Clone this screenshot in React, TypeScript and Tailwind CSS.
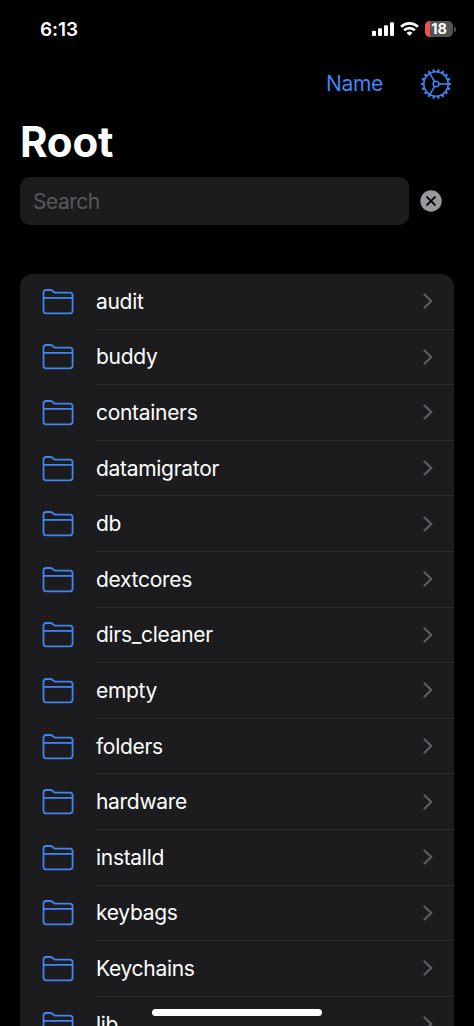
const GEAR_TEETH = 18;

const folders = [
  'audit',
  'buddy',
  'containers',
  'datamigrator',
  'db',
  'dextcores',
  'dirs_cleaner',
  'empty',
  'folders',
  'hardware',
  'installd',
  'keybags',
  'Keychains',
  'lib',
];

function SignalIcon() {
  return (
    <svg width="22" height="14" viewBox="0 0 22 14" fill="currentColor">
      <rect x="0" y="8.8" width="4" height="5.2" rx="1.1" />
      <rect x="6" y="6.2" width="4" height="7.8" rx="1.1" />
      <rect x="12" y="3.2" width="4" height="10.8" rx="1.1" />
      <rect x="18" y="0.2" width="4" height="13.8" rx="1.1" />
    </svg>
  );
}

function WifiIcon() {
  return (
    <svg width="19" height="14" viewBox="0 0 19 14" fill="none" stroke="currentColor" strokeWidth="2.7">
      <path d="M1 4.8 A12.2 12.2 0 0 1 18 4.8" />
      <path d="M4.1 8.3 A7.8 7.8 0 0 1 14.9 8.3" />
      <path d="M9.5 13.8 L6.6 10.9 A4.1 4.1 0 0 1 12.4 10.9 Z" fill="currentColor" stroke="none" />
    </svg>
  );
}

function Battery({ level }: { level: number }) {
  return (
    <div className="flex items-center gap-px">
      <div className="relative h-4 w-7 overflow-hidden rounded-[5px] bg-[#545456]">
        <div className="h-full bg-[#f2504b]" style={{ width: `${level}%` }} />
        <span className="absolute inset-0 text-center text-[14.5px] leading-4 font-bold">{level}</span>
      </div>
      <div className="h-[5px] w-[2px] rounded-r-full bg-[#545456]" />
    </div>
  );
}

function GearIcon() {
  const teeth = Array.from({ length: GEAR_TEETH }, (_, i) => (i * 360) / GEAR_TEETH);
  return (
    <svg width="30" height="30" viewBox="-15 -15 30 30" fill="none" stroke="currentColor" strokeWidth="1.6">
      <circle r="12.2" />
      <circle r="2.8" strokeWidth="1.5" />
      {[0, 120, 240].map((angle) => (
        <path key={angle} d="M2.8 0 H12" transform={`rotate(${angle})`} />
      ))}
      {teeth.map((angle) => (
        <path key={angle} d="M12.4 0 H14.9" strokeWidth="2.2" transform={`rotate(${angle})`} />
      ))}
    </svg>
  );
}

function FolderIcon() {
  return (
    <svg width="32" height="26" viewBox="0 0 32 26" fill="none" stroke="currentColor" strokeWidth="1.8" strokeLinejoin="round">
      <path d="M1.5 21.8V3.6Q1.5 1 4.1 1H8.4Q9.6 1 10.5 1.8L11.9 3Q12.8 3.7 14 3.7H27.9Q30.6 3.7 30.6 6.4V21.6Q30.6 24.3 27.9 24.3H4.1Q1.5 24.3 1.5 21.8Z" />
      <path d="M1.5 8.9H30.6" />
    </svg>
  );
}

function Chevron() {
  return (
    <svg width="10" height="16" viewBox="0 0 10 16" fill="none" stroke="#5c5c60" strokeWidth="2.3" strokeLinecap="round" strokeLinejoin="round">
      <path d="M1.5 1.5L8.3 8L1.5 14.5" />
    </svg>
  );
}

function FolderRow({ name }: { name: string }) {
  return (
    <li className="flex h-[55.6px] pl-[22px]">
      <div className="flex w-[54px] shrink-0 items-center text-[#4184f0]">
        <FolderIcon />
      </div>
      <div className="flex grow items-center justify-between border-b border-[#2d2d2f] pr-[21px]">
        <span className="pt-px text-[21px] leading-7 tracking-[-0.3px]">{name}</span>
        <Chevron />
      </div>
    </li>
  );
}

export default function App() {
  return (
    <div className="relative flex h-[1026px] w-[474px] flex-col overflow-hidden bg-black font-['Inter','Liberation_Sans',sans-serif] text-white">
      <header className="flex h-[58px] shrink-0 items-center justify-between pr-[18px] pl-10">
        <span className="pt-[2px] text-[19px] font-semibold tracking-[-0.1px]">6:13</span>
        <div className="flex items-center gap-[6px]">
          <SignalIcon />
          <WifiIcon />
          <Battery level={18} />
        </div>
      </header>

      <nav className="flex h-[52px] shrink-0 items-center justify-end gap-[38px] pr-[23px] text-[#3f86f5]">
        <button className="text-[21px] tracking-[-0.3px]">Name</button>
        <button aria-label="Settings">
          <GearIcon />
        </button>
      </nav>

      <h1 className="flex h-[67px] shrink-0 items-center pb-[5px] pl-5 text-[42px] font-bold tracking-[-0.2px]">Root</h1>

      <div className="flex shrink-0 items-center gap-[11px] px-5">
        <input
          className="h-12 w-[389px] rounded-[10px] bg-[#1c1c1e] px-[13px] text-[21px] tracking-[-0.5px] outline-none placeholder:text-[#58585c]"
          placeholder="Search"
        />
        <button aria-label="Clear">
          <svg width="22" height="22" viewBox="0 0 22 22">
            <circle cx="11" cy="11" r="10.7" fill="#98989f" />
            <path d="M7.1 7.1L14.9 14.9M14.9 7.1L7.1 14.9" stroke="#000" strokeWidth="1.9" strokeLinecap="round" />
          </svg>
        </button>
      </div>

      <ul className="mx-5 mt-[49px] w-[434px] shrink-0 rounded-t-[13px] bg-[#1c1c1e]">
        {folders.map((name) => (
          <FolderRow key={name} name={name} />
        ))}
      </ul>

      {/* home indicator */}
      <div className="absolute bottom-[10px] left-[152px] h-[7px] w-[170px] rounded-full bg-white" />
    </div>
  );
}
